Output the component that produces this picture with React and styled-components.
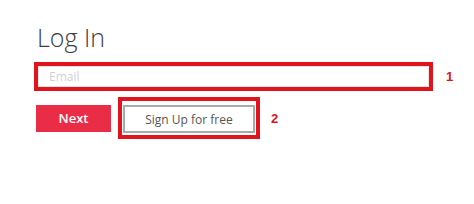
import React from "react";
import styled, { createGlobalStyle } from "styled-components";

const GlobalStyle = createGlobalStyle`
  html, body {
    margin: 0;
    padding: 0;
    background: #fff;
  }
  body {
    font-family: "Open Sans", "Liberation Sans", sans-serif;
  }
`;

const Page = styled.div`
  width: 474px;
  height: 204px;
  padding: 20px 0 0 34px;
  box-sizing: border-box;
`;

const Title = styled.h1`
  margin: 0 0 0 3px;
  font-size: 25px;
  line-height: 34px;
  font-weight: 300;
  color: #3d3d3d;
`;

const Row = styled.div`
  display: flex;
  align-items: center;
  margin-top: ${(p) => p.top || 0}px;
`;

const Marker = styled.div`
  border: 4px solid #e0131f;
  box-sizing: border-box;
  width: ${(p) => p.w}px;
  height: ${(p) => p.h}px;
  padding: ${(p) => p.pad || "0"};
  margin-left: ${(p) => p.left || 0}px;
  display: flex;
`;

const EmailInput = styled.input`
  flex: 1;
  border: 1px solid #e4e4e4;
  outline: none;
  font-family: inherit;
  font-size: 12px;
  padding: 0 10px;
  color: #333;
  background: #fff;
  &::placeholder {
    color: #cfcfd6;
  }
`;

const Num = styled.span`
  font-family: "Liberation Sans", Arial, sans-serif;
  font-weight: bold;
  font-size: 13px;
  color: #d9141e;
  margin-left: ${(p) => p.gap}px;
`;

const NextButton = styled.button`
  width: 75px;
  height: 27px;
  margin-left: 2px;
  border: none;
  background: #ea2d47;
  color: #fff;
  font-family: inherit;
  font-weight: 600;
  font-size: 13px;
  padding: 0;
`;

const SignUpButton = styled.button`
  flex: 1;
  border: 2px solid #a9a9a9;
  background: #fff;
  color: #555;
  font-family: inherit;
  font-size: 12px;
  padding: 0;
`;

export default function App() {
  return (
    <>
      <GlobalStyle />
      <Page>
        <Title>Log In</Title>
        <Row top={8}>
          <Marker w={399} h={29}>
            <EmailInput placeholder="Email" />
          </Marker>
          <Num gap={13}>1</Num>
        </Row>
        <Row top={6}>
          <NextButton>Next</NextButton>
          <Marker w={142} h={42} pad="4px 1px 2px" left={7}>
            <SignUpButton>Sign Up for free</SignUpButton>
          </Marker>
          <Num gap={11}>2</Num>
        </Row>
      </Page>
    </>
  );
}
